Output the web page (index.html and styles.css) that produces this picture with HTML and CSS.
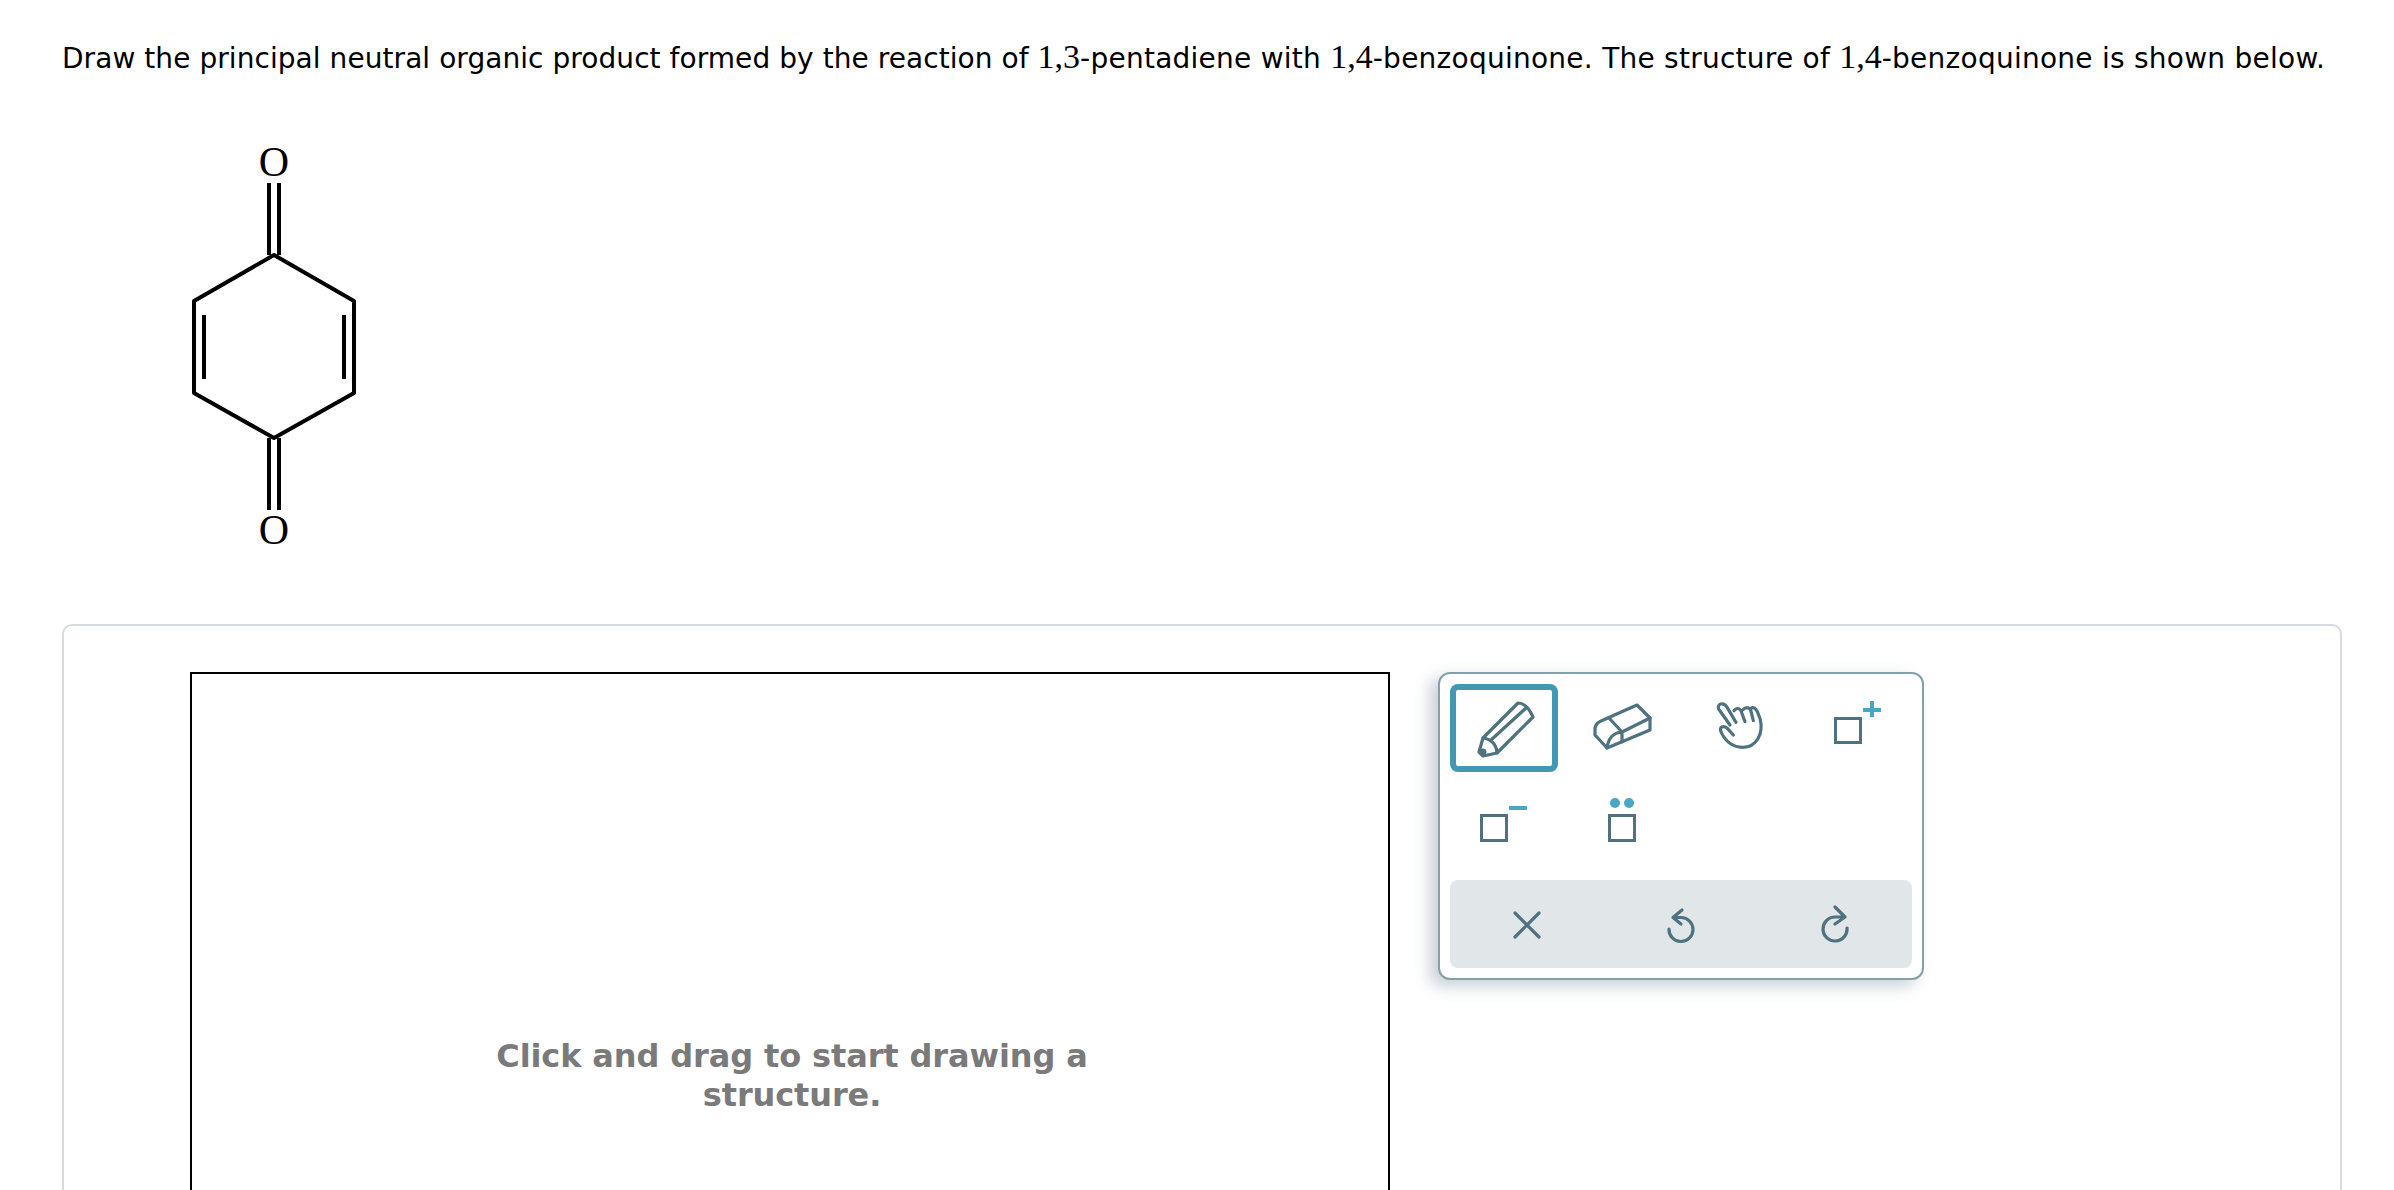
FILE: index.html
```html
<!DOCTYPE html>
<html lang="en">
<head>
  <meta charset="UTF-8" />
  <title>Draw the product</title>
  <link rel="stylesheet" href="styles.css">
</head>
<body>

  <p class="question"><span class="lead">Draw the principal neutral organic product formed by the reaction of </span><span class="num">1,3</span>-pentadiene with <span class="num">1,4</span>-benzoquinone. The structure of <span class="num">1,4</span>-benzoquinone is shown below.</p>

  <svg class="molecule" width="250" height="430" viewBox="150 130 250 430">
    <g stroke="#000" stroke-width="4" fill="none" stroke-linejoin="round">
      <path d="M274 254 L354 300 V392 L274 437 L194 392 V300 Z" />
      <path d="M204 314 V378 M344 314 V378" />
      <path d="M269 182 V254 M279 182 V254 M269 437 V509 M279 437 V509" />
    </g>
    <text class="atom" x="274" y="175">O</text>
    <text class="atom" x="274" y="543">O</text>
  </svg>

  <div class="panel">
    <div class="canvas">
      <div class="hint">Click and drag to start drawing a structure.</div>
    </div>

    <div class="toolbar">
      <div class="tools">
        <div class="tool active">
          <svg viewBox="0 0 108 88">
            <g class="line">
              <path d="M33 54 L68 19 Q77 19 83 33 L47 69 L33 72 L29 68 Z" />
              <path d="M33 54 Q46 56 47 69 M41 56 L76 24" />
            </g>
            <circle class="tip" cx="33" cy="68" r="3.5" />
          </svg>
        </div>
        <div class="tool">
          <svg viewBox="0 0 108 88">
            <g class="line">
              <path d="M69 21 L82 34 V46 L39 64 L27 51 V44 Q28 39 33 37 Z" />
              <path d="M41 34 L54 48 L82 34 M54 48 V58 M54 48 Q41 49 39 64" />
            </g>
          </svg>
        </div>
        <div class="tool">
          <svg viewBox="0 0 108 88">
            <g class="line hand" transform="translate(-6 -24) scale(.3333)">
              <path d="M150 195 L116 147 C110 132 130 125 140 140 L168 187" />
              <path d="M162 152 Q172 140 182 150 L195 185" />
              <path d="M188 150 Q202 136 212 150 L220 182" />
              <path d="M212 145 Q224 138 232 155 L240 175 C252 220 230 262 188 262 C155 262 135 240 124 218 C116 200 130 195 142 205 L160 225" />
            </g>
          </svg>
        </div>
        <div class="tool">
          <svg viewBox="0 0 108 88">
            <rect class="box" x="31.500" y="34.500" width="25" height="24" />
            <path class="accent" d="M59 26 H77 M68 17 V33" />
          </svg>
        </div>
        <div class="tool">
          <svg viewBox="0 0 108 88">
            <rect class="box" x="31.500" y="31.500" width="25" height="25" />
            <path class="accent" d="M59 24 H77" />
          </svg>
        </div>
        <div class="tool">
          <svg viewBox="0 0 108 88">
            <rect class="box" x="41.500" y="31.500" width="25" height="25" />
            <circle class="dot" cx="47" cy="19" r="5" />
            <circle class="dot" cx="61" cy="19" r="5" />
          </svg>
        </div>
      </div>

      <div class="actions">
        <div class="action">
          <svg viewBox="0 0 40 40"><path class="line" d="M8 8 L32 32 M32 8 L8 32" /></svg>
        </div>
        <div class="action">
          <svg viewBox="0 0 40 40"><path class="line" d="M21 5 L12 12.500 L20 19 M12 12.500 H20 A12 12 0 1 1 8 24" /></svg>
        </div>
        <div class="action">
          <svg viewBox="0 0 40 40"><path class="line" d="M20 2 L30 12 L20 19 M30 12 H20 A12 12 0 1 0 32 23" /></svg>
        </div>
      </div>
    </div>
  </div>

</body>
</html>
```

FILE: styles.css
```css
html, body {
  margin: 0;
  height: 1190px;
  overflow: hidden;
  background: #fff;
}

body {
  font-family: "DejaVu Sans", Verdana, sans-serif;
}

.question {
  margin: 0;
  padding: 40px 0 0 62px;
  font-size: 28px;
  line-height: 33px;
  letter-spacing: 0.25px;
  color: #000;
  white-space: nowrap;
}

.lead {
  letter-spacing: 0.06px;
}

.num {
  font-family: "Liberation Serif", serif;
  font-size: 34px;
  letter-spacing: 0;
}

.molecule {
  display: block;
  margin: 56px 0 0 150px;
}

.atom {
  font-family: "Liberation Serif", serif;
  font-size: 42px;
  text-anchor: middle;
}

.panel {
  display: flex;
  align-items: flex-start;
  gap: 48px;
  width: 2280px;
  height: 1000px;
  margin: 63px 0 0 62px;
  padding: 46px 0 0 126px;
  box-sizing: border-box;
  border: 2px solid #d5dbdf;
  border-radius: 10px;
}

.canvas {
  display: flex;
  align-items: center;
  justify-content: center;
  width: 1200px;
  height: 808px;
  box-sizing: border-box;
  border: 2px solid #000;
}

.hint {
  width: 620px;
  padding-left: 4px;
  font-size: 32px;
  font-weight: bold;
  line-height: 39px;
  letter-spacing: -0.12px;
  text-align: center;
  color: #7a7a7a;
}

.toolbar {
  width: 486px;
  height: 308px;
  padding: 10px;
  box-sizing: border-box;
  background: #fff;
  border: 2px solid #84a0aa;
  border-radius: 12px;
  box-shadow: -8px 6px 16px rgba(70, 100, 115, 0.3);
}

.tools {
  display: grid;
  grid-template-columns: repeat(4, 108px);
  grid-auto-rows: 88px;
  gap: 12px 10px;
}

.tool svg {
  display: block;
  width: 108px;
  height: 88px;
}

.tool.active {
  border-radius: 8px;
  box-shadow: inset 0 0 0 6px #4297b3;
}

.actions {
  display: grid;
  grid-template-columns: repeat(3, 154px);
  height: 88px;
  margin-top: 8px;
  background: #e1e6e8;
  border-radius: 8px;
}

.action {
  display: flex;
  align-items: center;
  justify-content: center;
}

.action svg {
  width: 40px;
  height: 40px;
  margin-top: 2px;
}

.line {
  fill: none;
  stroke: #4f7280;
  stroke-width: 3.200;
  stroke-linecap: round;
  stroke-linejoin: round;
}

.line.hand {
  stroke-width: 9.500;
}

.tip {
  fill: #4f7280;
}

.box {
  fill: none;
  stroke: #4f7280;
  stroke-width: 3;
}

.accent {
  fill: none;
  stroke: #4aa6c4;
  stroke-width: 4;
}

.dot {
  fill: #4aa6c4;
}
```
